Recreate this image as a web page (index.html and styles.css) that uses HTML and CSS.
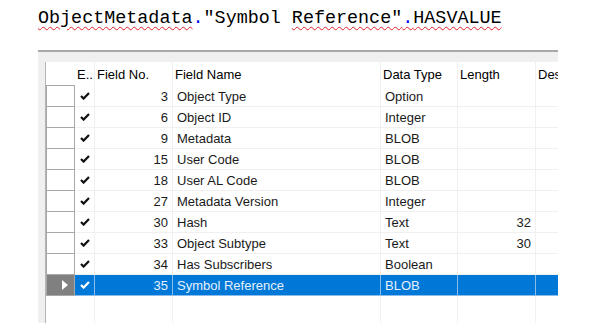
FILE: index.html
```html
<!DOCTYPE html>
<html lang="en">
<head>
  <meta charset="UTF-8">
  <title>Symbol Reference</title>
  <meta name="viewport" content="width=device-width, initial-scale=1.0">
  <link rel="stylesheet" href="styles.css">
</head>
<body>

<!-- Code line -->
<div class="code"><span class="typo">ObjectMetadata</span><span class="dot">.</span>"Symbol <span class="typo">Reference"<span class="dot">.</span>HASVALUE</span></div>

<!-- Field grid -->
<div class="panel">
  <div class="grid">
    <div class="row head">
      <div class="rh"></div>
      <div class="cell">E..</div>
      <div class="cell">Field No.</div>
      <div class="cell">Field Name</div>
      <div class="cell">Data Type</div>
      <div class="cell">Length</div>
      <div class="cell">Description</div>
    </div>

    <div class="row"><div class="rh"></div><div class="cell chk"><svg width="10" height="8" viewBox="0 0 10 8"><path d="M1 4 L3.6 6.6 L9 1" /></svg></div><div class="cell num">3</div><div class="cell">Object Type</div><div class="cell">Option</div><div class="cell num"></div><div class="cell"></div></div>
    <div class="row"><div class="rh"></div><div class="cell chk"><svg width="10" height="8" viewBox="0 0 10 8"><path d="M1 4 L3.6 6.6 L9 1" /></svg></div><div class="cell num">6</div><div class="cell">Object ID</div><div class="cell">Integer</div><div class="cell num"></div><div class="cell"></div></div>
    <div class="row"><div class="rh"></div><div class="cell chk"><svg width="10" height="8" viewBox="0 0 10 8"><path d="M1 4 L3.6 6.6 L9 1" /></svg></div><div class="cell num">9</div><div class="cell">Metadata</div><div class="cell">BLOB</div><div class="cell num"></div><div class="cell"></div></div>
    <div class="row"><div class="rh"></div><div class="cell chk"><svg width="10" height="8" viewBox="0 0 10 8"><path d="M1 4 L3.6 6.6 L9 1" /></svg></div><div class="cell num">15</div><div class="cell">User Code</div><div class="cell">BLOB</div><div class="cell num"></div><div class="cell"></div></div>
    <div class="row"><div class="rh"></div><div class="cell chk"><svg width="10" height="8" viewBox="0 0 10 8"><path d="M1 4 L3.6 6.6 L9 1" /></svg></div><div class="cell num">18</div><div class="cell">User AL Code</div><div class="cell">BLOB</div><div class="cell num"></div><div class="cell"></div></div>
    <div class="row"><div class="rh"></div><div class="cell chk"><svg width="10" height="8" viewBox="0 0 10 8"><path d="M1 4 L3.6 6.6 L9 1" /></svg></div><div class="cell num">27</div><div class="cell">Metadata Version</div><div class="cell">Integer</div><div class="cell num"></div><div class="cell"></div></div>
    <div class="row"><div class="rh"></div><div class="cell chk"><svg width="10" height="8" viewBox="0 0 10 8"><path d="M1 4 L3.6 6.6 L9 1" /></svg></div><div class="cell num">30</div><div class="cell">Hash</div><div class="cell">Text</div><div class="cell num">32</div><div class="cell"></div></div>
    <div class="row"><div class="rh"></div><div class="cell chk"><svg width="10" height="8" viewBox="0 0 10 8"><path d="M1 4 L3.6 6.6 L9 1" /></svg></div><div class="cell num">33</div><div class="cell">Object Subtype</div><div class="cell">Text</div><div class="cell num">30</div><div class="cell"></div></div>
    <div class="row"><div class="rh"></div><div class="cell chk"><svg width="10" height="8" viewBox="0 0 10 8"><path d="M1 4 L3.6 6.6 L9 1" /></svg></div><div class="cell num">34</div><div class="cell">Has Subscribers</div><div class="cell">Boolean</div><div class="cell num"></div><div class="cell"></div></div>
    <div class="row selected"><div class="rh"><svg width="6" height="10" viewBox="0 0 6 10"><polygon points="0,0 6,5 0,10" /></svg></div><div class="cell chk"><svg width="10" height="8" viewBox="0 0 10 8"><path d="M1 4 L3.6 6.6 L9 1" /></svg></div><div class="cell num">35</div><div class="cell">Symbol Reference</div><div class="cell">BLOB</div><div class="cell num"></div><div class="cell"></div></div>

    <div class="row filler"><div class="rh"></div><div class="cell"></div><div class="cell"></div><div class="cell"></div><div class="cell"></div><div class="cell"></div><div class="cell"></div></div>
  </div>
</div>

</body>
</html>
```

FILE: styles.css
```css
* {
  margin: 0;
  padding: 0;
  box-sizing: border-box;
}

body {
  background: white;
  overflow: hidden;
}

.code {
  font-family: "Liberation Mono", monospace;
  font-size: 18.4px;
  line-height: 22px;
  padding: 8px 0 0 38px;
  color: #000;
  white-space: pre;
}

.code .dot {
  color: #0000ff;
}

.code .typo {
  text-decoration: underline wavy #e0202a;
  text-decoration-thickness: 1px;
  text-underline-offset: 3px;
}

.panel {
  margin: 20px 0 0 38px;
  width: 520px;
  height: 273px;
  background: #f0f0f0;
  border-top: 2px solid #a9a9a9;
  padding: 10px 0 0 7px;
  overflow: hidden;
}

.grid {
  width: 600px;
  background: white;
  border-left: 1px solid #b4b4b4;
  font-family: "Liberation Sans", Arial, sans-serif;
  font-size: 13px;
  color: #1a1a1a;
}

.row {
  display: grid;
  grid-template-columns: 29px 20px 78px 208px 77px 78px 110px;
  height: 21px;
}

.row.head {
  height: 24px;
  color: #000;
}

.cell {
  border-right: 1px solid #f0f0f0;
  border-bottom: 1px solid #f0f0f0;
  padding: 0 4px 0 4px;
  display: flex;
  align-items: center;
  white-space: nowrap;
  overflow: hidden;
}

.head .cell {
  border-bottom: none;
  padding-left: 2px;
}

.cell.num {
  justify-content: flex-end;
}

.cell.chk {
  justify-content: center;
  padding: 0;
}

.chk svg path {
  fill: none;
  stroke: #111;
  stroke-width: 2.2;
}

.rh {
  background: white;
  border-left: 1px solid #a8a8a8;
  border-right: 1px solid #a8a8a8;
  border-bottom: 1px solid #a8a8a8;
  display: flex;
  align-items: center;
  justify-content: flex-end;
  padding-right: 6px;
}

.head .rh {
  border: none;
  border-bottom: 1px solid #a8a8a8;
}

.filler {
  height: 40px;
}

.filler .rh {
  border: none;
}

.filler .cell {
  border-bottom: none;
}

.selected .cell {
  background: #0078d7;
  color: #e6f0fb;
  border-right-color: #8cbcea;
  border-bottom-color: #8cbcea;
}

.selected .rh {
  background: #808080;
}

.selected .rh polygon {
  fill: white;
}

.selected .chk svg path {
  stroke: white;
}
```
